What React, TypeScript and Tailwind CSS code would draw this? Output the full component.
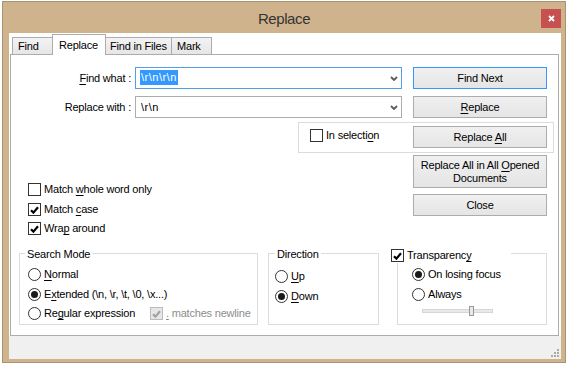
import React from 'react'

// underlined accelerator letter
function U({ children }: { children: React.ReactNode }) {
  return <span className="underline underline-offset-[2px]">{children}</span>
}

function Check({ checked, disabled }: { checked?: boolean; disabled?: boolean }) {
  return (
    <span
      className={`flex h-[13px] w-[13px] shrink-0 items-center justify-center border ${
        disabled ? 'border-[#bcbcbc] bg-[#e6e6e6]' : 'border-[#333] bg-white'
      }`}
    >
      {checked && (
        <svg width="9" height="8" viewBox="0 0 9 8">
          <path d="M1 4.2 L3.4 6.6 L8 1.2" stroke={disabled ? '#a2a2a2' : '#000'} strokeWidth="2.2" fill="none" />
        </svg>
      )}
    </span>
  )
}

function Radio({ checked }: { checked?: boolean }) {
  return (
    <span className="flex h-[13px] w-[13px] shrink-0 items-center justify-center rounded-full border border-[#333] bg-white">
      {checked && <span className="h-[7px] w-[7px] rounded-full bg-[#1a1a1a]" />}
    </span>
  )
}

function Btn({ children, focused, className = '' }: { children: React.ReactNode; focused?: boolean; className?: string }) {
  return (
    <div
      className={`flex w-[134px] shrink-0 items-center justify-center border bg-linear-to-b from-[#f0f0f0] to-[#e5e5e5] text-center ${
        focused ? 'border-[#3399ff]' : 'border-[#acacac]'
      } ${className}`}
    >
      {children}
    </div>
  )
}

function Combo({ focused, children }: { focused?: boolean; children: React.ReactNode }) {
  return (
    <div
      className={`ml-[4px] flex h-[22px] w-[267px] items-center border bg-white pl-[4px] pr-[3px] ${
        focused ? 'border-[#569de5]' : 'border-[#acacac]'
      }`}
    >
      <div className="flex-1">{children}</div>
      <svg width="8" height="5" viewBox="0 0 8 5">
        <path d="M1 1 L4 4 L7 1" stroke="#5a5a5a" strokeWidth="1.8" fill="none" />
      </svg>
    </div>
  )
}

function Opt({ children, radio, checked }: { children: React.ReactNode; radio?: boolean; checked?: boolean }) {
  return (
    <div className="flex h-[13px] items-center gap-[3px]">
      {radio ? <Radio checked={checked} /> : <Check checked={checked} />}
      <span className="whitespace-nowrap">{children}</span>
    </div>
  )
}

export default function App() {
  const tabs = [
    { label: 'Find', w: 'w-[41px] pl-[5px]' },
    { label: 'Replace', w: 'w-[54px] pl-[6px]', active: true },
    { label: 'Find in Files', w: 'w-[67px] pl-[4px]' },
    { label: 'Mark', w: 'w-[41px] pl-[5px]' },
  ]

  return (
    <div className="h-[368px] w-[570px] overflow-hidden bg-white pl-[2px] pt-[1px] font-['Liberation_Sans',Arial,sans-serif] text-[11px] leading-[13px] tracking-[-0.2px] text-black">
      <div className="flex h-[362px] w-[564px] flex-col border border-[#a89372] bg-[#cfb38c]">
        {/* Title bar */}
        <div className="grid h-[31px] shrink-0 grid-cols-[1fr_auto_1fr]">
          <div />
          <div className="pt-[8px] text-[15px] leading-[17px] tracking-[-0.4px] text-[#333]">Replace</div>
          <div className="flex justify-end pr-[4px] pt-[7px]">
            <div className="flex h-[19px] w-[20px] items-center justify-center bg-[#c75050]">
              <svg width="7" height="7" viewBox="0 0 7 7">
                <path d="M1 1 L6 6 M6 1 L1 6" stroke="#fff" strokeWidth="1.8" />
              </svg>
            </div>
          </div>
        </div>

        {/* Client area */}
        <div className="ml-[6px] flex h-[326px] w-[552px] flex-col bg-white">
          {/* Tabs */}
          <div className="flex h-[21px] shrink-0 items-end pl-[3px]">
            {tabs.map((t, i) => (
              <div
                key={t.label}
                className={`flex items-center border-l border-r border-t border-[#acacac] ${t.w} ${i > 0 ? '-ml-[1px]' : ''} ${
                  t.active ? 'relative z-10 -mb-[1px] h-[21px] bg-white' : 'h-[17px] bg-linear-to-b from-[#f3f3f3] to-[#e6e6e6]'
                }`}
              >
                {t.label}
              </div>
            ))}
          </div>

          {/* Tab panel */}
          <div className="ml-[1px] h-[282px] w-[549px] shrink-0 border border-[#acacac] bg-white">
            <div className="pt-[12px]">
              <div className="flex h-[22px] items-center">
                <div className="w-[120px] text-right">
                  <U>F</U>ind what :
                </div>
                <Combo focused>
                  <span className="mb-[2px] inline-block bg-[#3399ff] px-[1px] leading-[15px] tracking-[0.5px] text-white">\r\n\r\n</span>
                </Combo>
                <Btn focused className="ml-[11px] h-[22px]">
                  Find Next
                </Btn>
              </div>

              <div className="mt-[7px] flex h-[22px] items-center">
                <div className="w-[120px] text-right">Replace with :</div>
                <Combo>
                  <span className="pl-[1px] tracking-[0.5px]">\r\n</span>
                </Combo>
                <Btn className="ml-[11px] h-[22px]">
                  <span>
                    <U>R</U>eplace
                  </span>
                </Btn>
              </div>

              <div className="flex h-[135px]">
                {/* options */}
                <div className="w-[287px] pl-[17px] pt-[65px]">
                  <Opt>
                    Match <U>w</U>hole word only
                  </Opt>
                  <div className="mt-[7px]">
                    <Opt checked>
                      Match <U>c</U>ase
                    </Opt>
                  </div>
                  <div className="mt-[6px]">
                    <Opt checked>
                      Wra<U>p</U> around
                    </Opt>
                  </div>
                </div>

                {/* buttons */}
                <div>
                  <div className="mt-[4px] flex h-[31px] w-[256px] items-start border border-[#dcdcdc]">
                    <div className="w-[114px] pl-[11px] pt-[6px]">
                      <Opt>
                        In selecti<U>o</U>n
                      </Opt>
                    </div>
                    <Btn className="mt-[3px] h-[22px]">
                      <span>
                        Replace <U>A</U>ll
                      </span>
                    </Btn>
                  </div>
                  <Btn className="ml-[115px] mt-[2px] h-[33px]">
                    <span>
                      Replace All in All <U>O</U>pened
                      <br />
                      Documents
                    </span>
                  </Btn>
                  <Btn className="ml-[115px] mt-[6px] h-[22px]">Close</Btn>
                </div>
              </div>

              {/* group boxes */}
              <div className="flex">
                <div className="relative ml-[8px] h-[72px] w-[239px] border border-[#dcdcdc] pl-[8px] pt-[14px]">
                  <span className="absolute -top-[6px] left-[5px] bg-white px-[2px]">Search Mode</span>
                  <Opt radio>
                    <U>N</U>ormal
                  </Opt>
                  <div className="mt-[7px]">
                    <Opt radio checked>
                      E<U>x</U>tended (\n, \r, \t, \0, \x...)
                    </Opt>
                  </div>
                  <div className="mt-[6px] flex">
                    <div className="w-[122px]">
                      <Opt radio>
                        Re<U>g</U>ular expression
                      </Opt>
                    </div>
                    <div className="flex h-[13px] items-center gap-[3px] text-[#8d8d8d]">
                      <Check checked disabled />
                      <span className="whitespace-nowrap">
                        <U>.</U> matches newline
                      </span>
                    </div>
                  </div>
                </div>

                <div className="relative ml-[10px] h-[72px] w-[111px] border border-[#dcdcdc] pl-[6px] pt-[16px]">
                  <span className="absolute -top-[6px] left-[6px] bg-white px-[2px]">Direction</span>
                  <Opt radio>
                    <U>U</U>p
                  </Opt>
                  <div className="mt-[7px]">
                    <Opt radio checked>
                      <U>D</U>own
                    </Opt>
                  </div>
                </div>

                <div className="relative ml-[18px] h-[72px] w-[150px] border border-[#dcdcdc] pl-[14px] pt-[14px]">
                  <div className="absolute -left-[10px] -top-[6px] flex h-[15px] w-[123px] items-center gap-[3px] bg-white pl-[3px]">
                    <Check checked />
                    <span>
                      Transparenc<U>y</U>
                    </span>
                  </div>
                  <Opt radio checked>
                    On losing focus
                  </Opt>
                  <div className="mt-[7px]">
                    <Opt radio>Always</Opt>
                  </div>
                  <div className="relative ml-[10px] mt-[5px] h-[10px] w-[71px] pt-[3px]">
                    <div className="h-[4px] w-full border border-[#d6d6d6] bg-[#e7eaea]" />
                    <div className="absolute left-[47px] top-0 h-[10px] w-[5px] border border-[#9a9a9a] bg-[#e9e9e9]" />
                  </div>
                </div>
              </div>
            </div>
          </div>

          {/* status strip with size grip */}
          <div className="flex h-[23px] shrink-0 items-end justify-end bg-[#f0f0f0] pb-[2px] pr-[2px]">
            <svg width="8" height="8" viewBox="0 0 8 8">
              <rect x="6" y="0" width="2" height="2" fill="#a9a9a9" />
              <rect x="3" y="3" width="2" height="2" fill="#a9a9a9" />
              <rect x="6" y="3" width="2" height="2" fill="#a9a9a9" />
              <rect x="0" y="6" width="2" height="2" fill="#a9a9a9" />
              <rect x="3" y="6" width="2" height="2" fill="#a9a9a9" />
              <rect x="6" y="6" width="2" height="2" fill="#a9a9a9" />
            </svg>
          </div>
        </div>
      </div>
    </div>
  )
}
